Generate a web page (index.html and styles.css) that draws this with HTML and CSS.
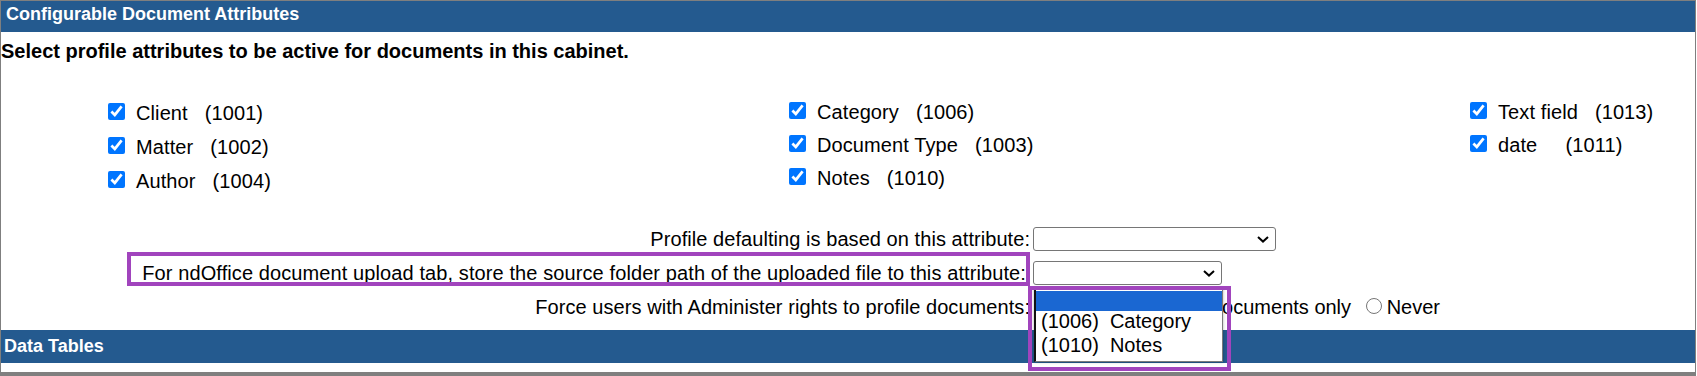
FILE: index.html
```html
<!DOCTYPE html>
<html lang="en">
<head>
    <meta charset="UTF-8">
    <meta name="viewport" content="width=device-width, initial-scale=1.0">
    <title>Configurable Document Attributes</title>
    <link rel="stylesheet" href="styles.css">
</head>
<body>
    <div class="frame">
        <div class="section-head">Configurable Document Attributes</div>
        <p class="intro">Select profile attributes to be active for documents in this cabinet.</p>

        <div class="attr-grid">
            <div class="attr-col attr-col-tall">
                <label class="attr"><input type="checkbox" checked>Client&nbsp;&nbsp;&nbsp;(1001)</label>
                <label class="attr"><input type="checkbox" checked>Matter&nbsp;&nbsp;&nbsp;(1002)</label>
                <label class="attr"><input type="checkbox" checked>Author&nbsp;&nbsp;&nbsp;(1004)</label>
            </div>
            <div class="attr-col">
                <label class="attr"><input type="checkbox" checked>Category&nbsp;&nbsp;&nbsp;(1006)</label>
                <label class="attr"><input type="checkbox" checked>Document Type&nbsp;&nbsp;&nbsp;(1003)</label>
                <label class="attr"><input type="checkbox" checked>Notes&nbsp;&nbsp;&nbsp;(1010)</label>
            </div>
            <div class="attr-col">
                <label class="attr"><input type="checkbox" checked>Text field&nbsp;&nbsp;&nbsp;(1013)</label>
                <label class="attr"><input type="checkbox" checked>date&nbsp;&nbsp;&nbsp;&nbsp;&nbsp;(1011)</label>
            </div>
        </div>

        <div class="settings">
            <div class="setting-row">
                <label class="setting-label" for="defaulting">Profile defaulting is based on this attribute:</label>
                <div class="select-wrap select-wide">
                    <select id="defaulting">
                        <option value=""></option>
                        <option value="1006">(1006)&nbsp;&nbsp;Category</option>
                        <option value="1010">(1010)&nbsp;&nbsp;Notes</option>
                    </select>
                    <svg class="chevron" width="12" height="7" viewBox="0 0 12 7"><path d="M1 1 L6 5.6 L11 1" fill="none" stroke="#000" stroke-width="2"/></svg>
                </div>
            </div>
            <div class="setting-row">
                <label class="setting-label setting-label-marked" for="sourcePath">For ndOffice document upload tab, store the source folder path of the uploaded file to this attribute:</label>
                <div class="select-wrap select-narrow">
                    <select id="sourcePath">
                        <option value=""></option>
                        <option value="1006">(1006)&nbsp;&nbsp;Category</option>
                        <option value="1010">(1010)&nbsp;&nbsp;Notes</option>
                    </select>
                    <svg class="chevron" width="12" height="7" viewBox="0 0 12 7"><path d="M1 1 L6 5.6 L11 1" fill="none" stroke="#000" stroke-width="2"/></svg>
                </div>

                <!-- open list of the select above, plus the highlight frames -->
                <div class="mark mark-label"></div>
                <ul class="dropdown-list">
                    <li class="option option-active"></li>
                    <li class="option">(1006)&nbsp;&nbsp;Category</li>
                    <li class="option">(1010)&nbsp;&nbsp;Notes</li>
                </ul>
                <div class="mark mark-list"></div>
            </div>
            <div class="setting-row">
                <span class="setting-label">Force users with Administer rights to profile documents:</span>
                <div class="radios">
                    <label><input type="radio" name="force">Always</label>
                    <label><input type="radio" name="force">New documents only</label>
                    <label><input type="radio" name="force">Never</label>
                </div>
            </div>
        </div>

        <div class="section-head section-head-data">Data Tables</div>
    </div>
</body>
</html>
```

FILE: styles.css
```css
body {
    margin: 0;
    font-family: "Liberation Sans", Arial, sans-serif;
    color: #000;
    background: #fff;
}
.frame {
    width: 1694px;
    border: 1px solid #7f7f7f;
    border-bottom-width: 4px;
    padding-bottom: 9px;
}
.section-head {
    background: #245a8f;
    color: #fff;
    font-size: 18px;
    font-weight: bold;
    line-height: 22px;
    padding: 2px 5px 7px;
}
.section-head-data {
    margin-top: 4px;
    padding: 5px 3px 6px;
}
.intro {
    margin: 7px 0 0;
    font-size: 20px;
    font-weight: bold;
    line-height: 24px;
}

/* attribute checkboxes */
.attr-grid {
    display: grid;
    grid-template-columns: 681px 681px 1fr;
    margin-top: 33px;
    padding-left: 107px;
    font-size: 20px;
}
.attr-col {
    display: flex;
    flex-direction: column;
    line-height: 33px;
}
.attr-col-tall {
    line-height: 34px;
}
.attr {
    white-space: nowrap;
    letter-spacing: 0.1px;
}
.attr input {
    width: 17px;
    height: 17px;
    margin: 0 11px 2px 0;
    vertical-align: baseline;
}

/* settings rows */
.settings {
    margin-top: 26px;
    font-size: 20px;
}
.setting-row {
    position: relative;
    display: grid;
    grid-template-columns: 1032px 1fr;
    height: 34px;
    line-height: 30px;
}
.setting-label {
    text-align: right;
    padding-right: 3px;
    white-space: nowrap;
    letter-spacing: 0.06px;
}
.setting-label-marked {
    padding-right: 7px;
    letter-spacing: 0.1px;
}
.select-wrap {
    position: relative;
    margin-top: 3px;
    height: 24px;
}
.select-wide {
    width: 243px;
}
.select-narrow {
    width: 189px;
}
.select-wrap select {
    appearance: none;
    -webkit-appearance: none;
    display: block;
    width: 100%;
    height: 24px;
    border: 1px solid #767676;
    border-radius: 3px;
    background: #fff;
    font-family: inherit;
    font-size: 16px;
}
.chevron {
    position: absolute;
    right: 7px;
    top: 9px;
}
.radios {
    padding-left: 3.5px;
}
.radios label {
    white-space: nowrap;
}
.radios input {
    width: 16px;
    height: 16px;
    margin: 0 5px 1px 9px;
    vertical-align: baseline;
}

/* open dropdown + annotation frames */
.dropdown-list {
    position: absolute;
    z-index: 2;
    left: 1033px;
    top: 30px;
    width: 189px;
    height: 74px;
    margin: 0;
    padding: 2px 0;
    list-style: none;
    background: #fff;
    border: 1px solid #7a7a7a;
    border-left: 2px solid #111;
    box-shadow: 0 0 3px rgba(0, 0, 0, 0.3);
    box-sizing: border-box;
    line-height: 21px;
}
.option {
    height: 24px;
    padding-left: 5px;
    white-space: nowrap;
}
.option-active {
    height: 20px;
    background: #1a67d2;
}
.mark {
    position: absolute;
    z-index: 3;
    border: 4px solid #a144bd;
    box-sizing: border-box;
}
.mark-label {
    left: 126px;
    top: -6px;
    width: 903px;
    height: 34px;
}
.mark-list {
    left: 1027px;
    top: 28px;
    width: 203px;
    height: 85px;
}
```
